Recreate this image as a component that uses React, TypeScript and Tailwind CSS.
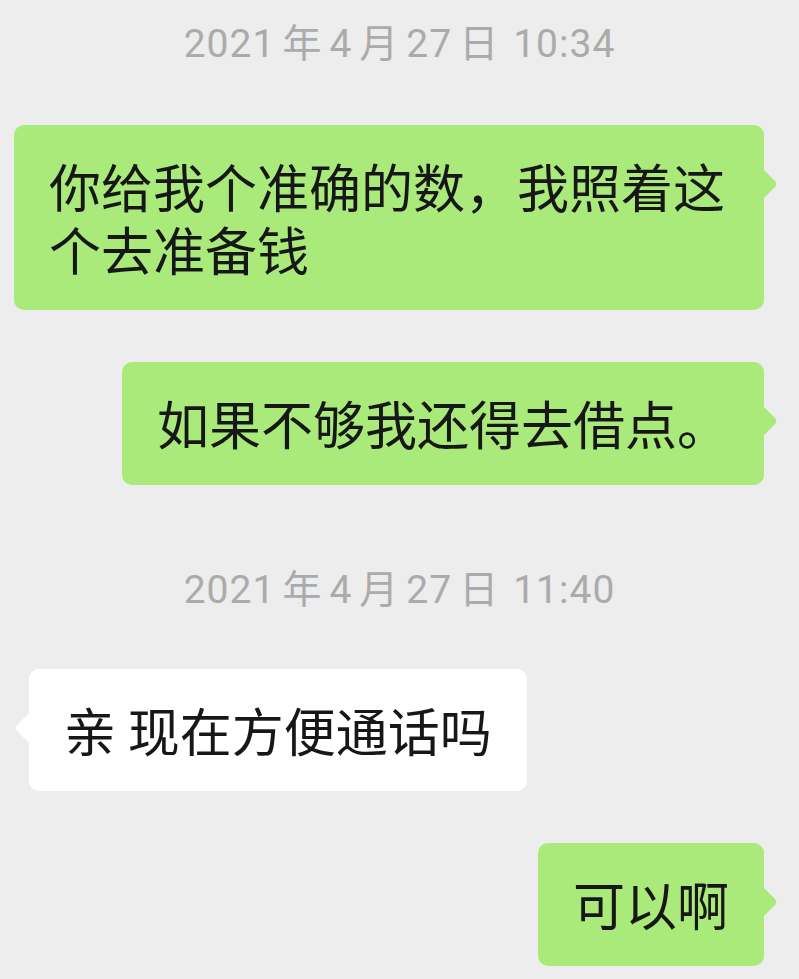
import type { ReactNode } from 'react'

const GREEN = 'bg-[#a9ea7a]'

function Stamp({ parts, time }: { parts: string[]; time: string }) {
  return (
    <div className="flex justify-center h-[40px] leading-[40px] text-[39px] tracking-[1px] text-[#ababab] font-['Roboto','Noto_Sans_CJK_SC',sans-serif]">
      <div className="flex gap-[7px]">
        {parts.map((p, i) => (
          <span key={i}>{p}</span>
        ))}
        <span className="ml-[7px]">{time}</span>
      </div>
    </div>
  )
}

function Tail({ side, color }: { side: 'left' | 'right'; color: string }) {
  // small pointer beside the bubble, 59px from its top
  return (
    <svg
      width="16"
      height="32"
      viewBox="0 0 16 32"
      className={
        side === 'right'
          ? 'absolute top-[43px] right-[-14px]'
          : 'absolute top-[43px] left-[-15px] -scale-x-100'
      }
    >
      <path d="M0 0 L13 13 Q15.5 16 13 19 L0 32 Z" fill={color} />
    </svg>
  )
}

function Bubble({ mine, children }: { mine: boolean; children: ReactNode }) {
  return (
    <div className={mine ? 'flex justify-end pr-[35px] pl-[14px]' : 'flex justify-start pl-[29px] pr-[35px]'}>
      <div
        className={`relative max-w-[750px] rounded-[10px] px-[35px] py-[30px] text-[52px] leading-[62.5px] text-[#171717] ${
          mine ? GREEN : 'bg-white'
        }`}
      >
        {children}
        <Tail side={mine ? 'right' : 'left'} color={mine ? '#a9ea7a' : '#ffffff'} />
      </div>
    </div>
  )
}

export default function App() {
  return (
    <div className="min-h-screen w-full bg-[#ededed] pt-[24px] pb-[15px] font-['Noto_Sans_CJK_SC','Noto_Sans',sans-serif]">
      <Stamp parts={['2021', '年', '4', '月', '27', '日']} time="10:34" />

      <div className="mt-[61px]">
        <Bubble mine>你给我个准确的数，我照着这个去准备钱</Bubble>
      </div>
      <div className="mt-[52px]">
        <Bubble mine>如果不够我还得去借点。</Bubble>
      </div>

      <div className="mt-[85px]">
        <Stamp parts={['2021', '年', '4', '月', '27', '日']} time="11:40" />
      </div>

      <div className="mt-[59px]">
        <Bubble mine={false}>亲 现在方便通话吗</Bubble>
      </div>
      <div className="mt-[52px]">
        <Bubble mine>可以啊</Bubble>
      </div>
    </div>
  )
}
